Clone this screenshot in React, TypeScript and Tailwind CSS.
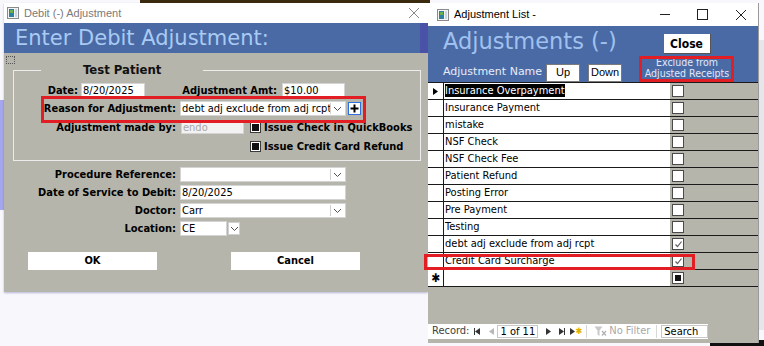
import React from "react";

const T = "font-['DejaVu_Sans_Condensed','DejaVu_Sans',sans-serif]";
const V = "font-['DejaVu_Sans',sans-serif]";
const UI = "font-['Liberation_Sans','Arial',sans-serif]";

function AppIcon() {
  return (
    <svg width="12" height="12" viewBox="0 0 12 12">
      <rect x="0.5" y="0.5" width="11" height="11" fill="#f4f4f4" stroke="#8a8a8a" />
      <rect x="2" y="2" width="5" height="8" fill="#2f7fa0" />
      <rect x="3" y="3" width="3" height="3" fill="#6ab04c" />
      <rect x="8" y="2" width="2" height="8" fill="#c9d6e3" />
    </svg>
  );
}

function Chevron() {
  return (
    <svg width="9" height="6" viewBox="0 0 9 6">
      <polyline points="1,1 4.5,4.5 8,1" fill="none" stroke="#505050" strokeWidth="1" />
    </svg>
  );
}

function Combo({ w, value }: { w: number; value: string }) {
  return (
    <div className="flex h-full items-stretch bg-white border border-[#d4d4d4]" style={{ width: w }}>
      <div className={`flex-1 pl-[1px] text-[11px] leading-[13px] text-black ${T} whitespace-nowrap overflow-hidden`}>{value}</div>
      <div className="w-[14px] flex items-center justify-center border-l border-[#d0d0d0] bg-white my-[1px] mr-[1px]">
        <Chevron />
      </div>
    </div>
  );
}

function Input({ w, value, dim }: { w: number; value: string; dim?: boolean }) {
  return (
    <div
      className={`h-full border border-[#d4d4d4] pl-[1px] text-[11px] leading-[13px] ${T} whitespace-nowrap overflow-hidden ${dim ? "bg-[#f2f2f2] text-[#a8a8a8]" : "bg-white text-black"}`}
      style={{ width: w }}
    >
      {value}
    </div>
  );
}

function NullBox() {
  return (
    <div className="w-[11px] h-[11px] border border-[#3a3a3a] bg-white flex items-center justify-center">
      <div className="w-[7px] h-[7px] bg-[#111]" />
    </div>
  );
}

function CheckBox({ checked }: { checked?: boolean }) {
  return (
    <div className="w-[12px] h-[12px] border border-[#4a4a4a] bg-white flex items-center justify-center">
      {checked && (
        <svg width="9" height="9" viewBox="0 0 9 9">
          <polyline points="1.5,4.5 3.5,6.5 7.5,1.5" fill="none" stroke="#606060" strokeWidth="1.2" />
        </svg>
      )}
    </div>
  );
}

function LeftWindow() {
  const lbl = `text-[11px] font-bold leading-[13px] text-black ${T} whitespace-nowrap text-right`;
  return (
    <div className="absolute left-[4px] top-[3px] w-[424px] h-[289px] bg-[#b5b5ab] shadow-[0_1px_2px_rgba(80,80,160,0.4)] flex flex-col">
      <div className="h-[20px] bg-white flex items-center pl-[3px] pr-[8px]">
        <AppIcon />
        <span className={`ml-[5px] text-[11px] text-[#7a7a7a] ${UI}`}>Debit (-) Adjustment</span>
        <svg className="ml-auto" width="12" height="12" viewBox="0 0 12 12">
          <path d="M1 1 L11 11 M11 1 L1 11" stroke="#8a8a8a" strokeWidth="1" />
        </svg>
      </div>
      <div className="h-[30px] bg-[#4a6aa6] flex">
        <div className={`flex-1 pl-[11px] text-[21px] leading-[30px] text-[#a9cbf3] ${V}`}>Enter Debit Adjustment:</div>
        <div className="w-[8px] bg-[#4a52a8]" />
      </div>
      <div className="flex-1 relative">
        <div className="absolute left-[2px] top-[3px] w-[9px] h-[8px] border border-dotted border-[#555]" />
        <fieldset className="ml-[9px] mt-[10px] w-[408px] border border-[#ececec] pb-[7px] pt-0 px-0">
          <legend className={`ml-[27px] px-[42px] text-[13px] font-bold leading-[14px] text-[#111] ${T}`}>Test Patient</legend>
          <div className="mt-[6px] h-[14px] flex items-center">
            <div className={`${lbl} w-[64px]`}>Date:</div>
            <div className="ml-[3px] h-full"><Input w={64} value="8/20/2025" /></div>
            <div className={`${lbl} w-[132px]`}>Adjustment Amt:</div>
            <div className="ml-[5px] h-full"><Input w={63} value="$10.00" /></div>
          </div>
          <div className="mt-[4px] h-[15px] flex items-center">
            <div className={`${lbl} w-[162px]`}>Reason for Adjustment:</div>
            <div className="ml-[4px] h-full"><Combo w={166} value="debt adj exclude from adj rcpt" /></div>
            <div className="ml-[2px] w-[13px] h-[13px] bg-white border border-[#2f6fe0] flex items-center justify-center">
              <svg width="9" height="9" viewBox="0 0 9 9">
                <path d="M4.5 0.5 V8.5 M0.5 4.5 H8.5" stroke="#000" strokeWidth="2" />
              </svg>
            </div>
          </div>
          <div className="mt-[4px] h-[14px] flex items-center">
            <div className={`${lbl} w-[162px]`}>Adjustment made by:</div>
            <div className="ml-[5px] h-full"><Input w={63} value="endo" dim /></div>
            <div className="ml-[6px]"><NullBox /></div>
            <div className={`ml-[3px] ${lbl}`}>Issue Check in QuickBooks</div>
          </div>
          <div className="mt-[6px] h-[13px] flex items-center">
            <div className="ml-[236px]"><NullBox /></div>
            <div className={`ml-[3px] ${lbl}`}>Issue Credit Card Refund</div>
          </div>
        </fieldset>
        <div className="mt-[6px] flex flex-col gap-[3px]">
          <div className="h-[15px] flex items-center">
            <div className={`${lbl} w-[172px]`}>Procedure Reference:</div>
            <div className="ml-[4px] h-full"><Combo w={166} value="" /></div>
          </div>
          <div className="h-[15px] flex items-center">
            <div className={`${lbl} w-[172px]`}>Date of Service to Debit:</div>
            <div className="ml-[4px] h-full"><Input w={166} value="8/20/2025" /></div>
          </div>
          <div className="h-[15px] flex items-center">
            <div className={`${lbl} w-[172px]`}>Doctor:</div>
            <div className="ml-[4px] h-full"><Combo w={166} value="Carr" /></div>
          </div>
          <div className="h-[15px] flex items-center">
            <div className={`${lbl} w-[172px]`}>Location:</div>
            <div className="ml-[4px] h-full"><Input w={47} value="CE" /></div>
            <div className="ml-[1px] w-[12px] h-[13px] bg-white border border-[#d0d0d0] flex items-center justify-center"><Chevron /></div>
          </div>
        </div>
        <div className="mt-[16px] flex">
          <div className={`ml-[24px] w-[129px] h-[18px] bg-white flex items-center justify-center text-[11px] font-bold text-black ${T}`}>OK</div>
          <div className={`ml-[74px] w-[129px] h-[18px] bg-white flex items-center justify-center text-[11px] font-bold text-black ${T}`}>Cancel</div>
        </div>
      </div>
    </div>
  );
}

const rows: { name: string; checked?: boolean }[] = [
  { name: "Insurance Overpayment" },
  { name: "Insurance Payment" },
  { name: "mistake" },
  { name: "NSF Check" },
  { name: "NSF Check Fee" },
  { name: "Patient Refund" },
  { name: "Posting Error" },
  { name: "Pre Payment" },
  { name: "Testing" },
  { name: "debt adj exclude from adj rcpt", checked: true },
  { name: "Credit Card Surcharge", checked: true },
];

function NavTri({ dir, color }: { dir: "l" | "r"; color: string }) {
  return (
    <svg width="5" height="7" viewBox="0 0 5 7">
      {dir === "r" ? <polygon points="0,0 5,3.5 0,7" fill={color} /> : <polygon points="5,0 0,3.5 5,7" fill={color} />}
    </svg>
  );
}

function RightWindow() {
  const btn = `bg-white border border-[#7a7a7a] flex items-center justify-center text-black`;
  return (
    <div className="absolute left-[428px] top-[3px] w-[331px] h-[340px] bg-[#b5b5ab] border-r border-[#9a9a9a] flex flex-col">
      <div className="h-[23px] bg-white flex items-center pl-[9px]">
        <AppIcon />
        <span className={`ml-[5px] text-[11px] text-black ${UI}`}>Adjustment List -</span>
        <svg className="ml-auto" width="11" height="11" viewBox="0 0 11 11">
          <path d="M0 5.5 H10" stroke="#222" strokeWidth="1" />
        </svg>
        <svg className="ml-[26px]" width="11" height="11" viewBox="0 0 11 11">
          <rect x="0.5" y="0.5" width="10" height="10" fill="none" stroke="#222" />
        </svg>
        <svg className="ml-[27px] mr-[11px]" width="12" height="12" viewBox="0 0 12 12">
          <path d="M1 1 L11 11 M11 1 L1 11" stroke="#222" strokeWidth="1" />
        </svg>
      </div>
      <div className="h-[56px] bg-[#4a6aa6] flex">
        <div className="w-[211px] flex flex-col">
          <div className={`pl-[15px] h-[34px] text-[22.5px] leading-[30px] text-[#a0c1ef] ${V}`}>Adjustments (-)</div>
          <div className="h-[19px] mt-[3px] flex items-center">
            <div className={`pl-[15px] w-[118px] text-[11px] text-[#e8ecf8] ${V}`}>Adjustment Name</div>
            <div className={`${btn} w-[34px] h-[18px] text-[11px] ${UI}`}>Up</div>
            <div className={`${btn} ml-[8px] w-[34px] h-[18px] text-[11px] ${UI}`}>Down</div>
          </div>
        </div>
        <div className="w-[96px] flex flex-col items-center">
          <div className={`mt-[8px] w-[47px] h-[20px] bg-white border-b border-r border-[#555] flex items-center justify-center text-[12px] font-bold text-black ${T}`}>Close</div>
          <div className={`mt-[3px] text-center text-[10.5px] leading-[11px] text-[#e2e8f8] ${T}`}>
            <div>Exclude from</div>
            <div>Adjusted Receipts</div>
          </div>
        </div>
      </div>
      <div className="flex flex-col border-b border-[#1a1a1a]">
        {rows.map((r, i) => (
          <div key={r.name} className="h-[17px] flex border-t border-[#1a1a1a]">
            <div className="w-[16px] bg-white border-r border-[#1a1a1a] flex items-center justify-center">
              {i === 0 && <NavTri dir="r" color="#000" />}
            </div>
            <div className={`w-[226px] bg-white pl-[1px] text-[11px] leading-[16px] text-black ${T} whitespace-nowrap`}>
              {i === 0 ? <span className="bg-black text-white">{r.name}</span> : r.name}
            </div>
            <div className="flex-1 flex items-center pl-[2px]">
              <CheckBox checked={r.checked} />
            </div>
          </div>
        ))}
        <div className="h-[17px] flex border-t border-[#1a1a1a]">
          <div className={`w-[16px] bg-white border-r border-[#1a1a1a] flex items-center justify-center text-[12px] leading-[16px] text-black ${T}`}>✱</div>
          <div className="w-[226px] bg-white" />
          <div className="flex-1 flex items-center pl-[2px]">
            <div className="w-[12px] h-[12px] border border-[#4a4a4a] bg-white flex items-center justify-center">
              <div className="w-[6px] h-[6px] bg-[#111]" />
            </div>
          </div>
        </div>
      </div>
      <div className="flex-1" />
      <div className={`mb-[4px] h-[15px] w-[280px] bg-white flex items-center text-[11px] ${T}`}>
        <span className="ml-[4px] text-[#404040]">Record:</span>
        <div className="ml-[5px] flex items-center">
          <div className="w-[1px] h-[7px] bg-[#333]" />
          <NavTri dir="l" color="#333" />
        </div>
        <div className="ml-[9px]"><NavTri dir="l" color="#b8b8b8" /></div>
        <div className="ml-[3px] w-[41px] h-[13px] border border-[#c8c8c8] pl-[2px] leading-[11px] text-black">1 of 11</div>
        <div className="ml-[8px]"><NavTri dir="r" color="#333" /></div>
        <div className="ml-[8px] flex items-center">
          <NavTri dir="r" color="#333" />
          <div className="w-[1px] h-[7px] bg-[#333]" />
        </div>
        <div className="ml-[5px] flex items-center">
          <NavTri dir="r" color="#333" />
          <span className="text-[9px] leading-[9px] text-[#e0b000]">✱</span>
        </div>
        <div className="ml-[4px] w-[1px] h-[13px] bg-[#d8d8d8]" />
        <svg className="ml-[7px]" width="13" height="11" viewBox="0 0 13 11">
          <polygon points="0.5,0.5 8.5,0.5 5.5,4.5 5.5,10 3.5,8.5 3.5,4.5" fill="#c8c8c8" />
          <path d="M8 5 L12 9.5 M12 5 L8 9.5" stroke="#b0b0b0" strokeWidth="1.2" />
        </svg>
        <span className="ml-[2px] text-[#a8a8a8]">No Filter</span>
        <div className="ml-[6px] w-[1px] h-[13px] bg-[#d8d8d8]" />
        <div className="ml-[4px] flex-1 h-[13px] border border-[#c8c8c8] pl-[2px] leading-[11px] text-black">Search</div>
      </div>
    </div>
  );
}

export default function App() {
  return (
    <div className="relative w-[764px] h-[346px] overflow-hidden bg-[#f8f8fc]">
      <div className="absolute left-[140px] top-0 w-[290px] h-[4px] bg-[#3b2a0e]" />
      <div className="absolute left-0 top-[100px] w-[4px] h-[110px] bg-[#a6a6ee]" />
      <div className="absolute left-[710px] top-[340px] w-[54px] h-[6px] bg-[#111]" />
      <div className="absolute left-[759px] top-[40px] w-[5px] h-[290px] bg-[#e6e6ec]" />
      <LeftWindow />
      <RightWindow />
      <div className="absolute left-[41px] top-[96px] w-[325px] h-[27px] border-[3px] border-[#e21d24]" />
      <div className="absolute left-[639px] top-[56px] w-[95px] h-[26px] border-[3px] border-[#e21d24]" />
      <div className="absolute left-[424px] top-[254px] w-[271px] h-[16px] border-[3px] border-[#e21d24]" />
    </div>
  );
}
